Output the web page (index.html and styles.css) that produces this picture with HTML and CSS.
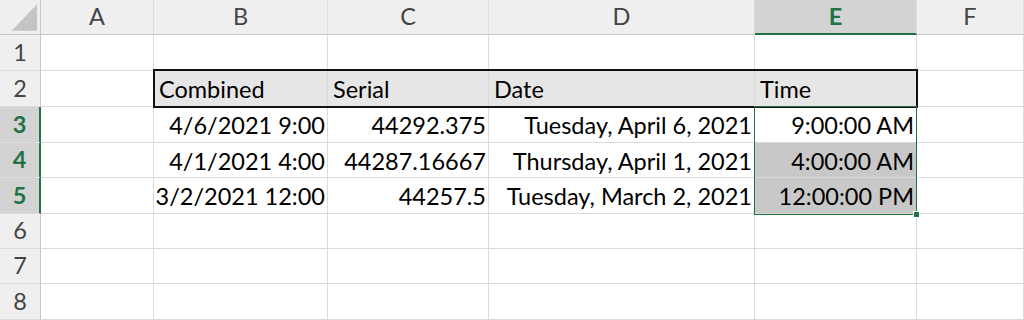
FILE: index.html
```html
<!DOCTYPE html>
<html lang="en">
<head>
    <meta charset="UTF-8">
    <title>Sheet1</title>
    <link rel="stylesheet" href="styles.css">
</head>
<body>
    <div class="sheet">
        <div class="cells">
            <!-- column headers -->
            <div class="corner">
                <svg width="41" height="35" viewBox="0 0 41 35"><polygon points="38,4 38,31 12,31" fill="#c4c4c4"/></svg>
            </div>
            <div class="col-hd">A</div>
            <div class="col-hd">B</div>
            <div class="col-hd">C</div>
            <div class="col-hd">D</div>
            <div class="col-hd active">E</div>
            <div class="col-hd">F</div>

            <div class="row-hd">1</div>
            <div class="cell"></div><div class="cell"></div><div class="cell"></div><div class="cell"></div><div class="cell"></div><div class="cell"></div>

            <div class="row-hd">2</div>
            <div class="cell"></div>
            <div class="cell th">Combined</div>
            <div class="cell th">Serial</div>
            <div class="cell th">Date</div>
            <div class="cell th">Time</div>
            <div class="cell"></div>

            <div class="row-hd active">3</div>
            <div class="cell"></div>
            <div class="cell num">4/6/2021 9:00</div>
            <div class="cell num">44292.375</div>
            <div class="cell num">Tuesday, April 6, 2021</div>
            <div class="cell num">9:00:00 AM</div>
            <div class="cell"></div>

            <div class="row-hd active">4</div>
            <div class="cell"></div>
            <div class="cell num">4/1/2021 4:00</div>
            <div class="cell num">44287.16667</div>
            <div class="cell num">Thursday, April 1, 2021</div>
            <div class="cell num picked">4:00:00 AM</div>
            <div class="cell"></div>

            <div class="row-hd active">5</div>
            <div class="cell"></div>
            <div class="cell num">3/2/2021 12:00</div>
            <div class="cell num">44257.5</div>
            <div class="cell num">Tuesday, March 2, 2021</div>
            <div class="cell num picked">12:00:00 PM</div>
            <div class="cell"></div>

            <div class="row-hd">6</div>
            <div class="cell"></div><div class="cell"></div><div class="cell"></div><div class="cell"></div><div class="cell"></div><div class="cell"></div>

            <div class="row-hd">7</div>
            <div class="cell"></div><div class="cell"></div><div class="cell"></div><div class="cell"></div><div class="cell"></div><div class="cell"></div>

            <div class="row-hd">8</div>
            <div class="cell"></div><div class="cell"></div><div class="cell"></div><div class="cell"></div><div class="cell"></div><div class="cell"></div>
        </div>

        <!-- borders and selection drawn over the cells -->
        <div class="marks">
            <div class="tbl-frame"></div>
            <div class="selection"><span class="fill-handle"></span></div>
        </div>
    </div>
</body>
</html>
```

FILE: styles.css
```css
body {
    margin: 0;
    background: #fff;
    overflow: hidden;
    font-family: Lato, "Liberation Sans", sans-serif;
    color: #000;
}
.sheet {
    display: grid;
    width: 1024px;
    height: 320px;
}
.cells, .marks {
    grid-area: 1 / 1;
    display: grid;
    grid-template-columns: 41px 113px 174px 161px 266px 162px 107px;
    grid-template-rows: 35px 36px 36px 36px 35px 36px 35px 35px 36px;
}
.marks {
    pointer-events: none;
}
.cells > div {
    box-sizing: border-box;
    border-right: 1px solid #dadada;
    border-bottom: 1px solid #dadada;
    font-size: 23.5px;
    line-height: 1;
    display: flex;
    align-items: center;
    white-space: nowrap;
}
.corner {
    background: #efefef;
    border-bottom-color: #c6c6c6 !important;
    border-right-color: #c6c6c6 !important;
}
.corner svg {
    display: block;
}
.col-hd {
    background: #efefef;
    color: #444;
    justify-content: center;
    border-bottom-color: #c6c6c6 !important;
    border-right-color: #dcdcdc !important;
}
.col-hd.active {
    background: #d3d3d3;
    color: #217346;
    font-weight: bold;
    border-bottom: 2px solid #217346 !important;
}
.row-hd {
    background: #efefef;
    color: #444;
    justify-content: center;
    border-right-color: #c6c6c6 !important;
    border-bottom-color: #dcdcdc !important;
}
.row-hd.active {
    background: #d3d3d3;
    color: #217346;
    font-weight: bold;
    border-right: 2px solid #217346 !important;
}
.cell {
    padding: 3px 2px 0 5px;
}
.th {
    background: #e7e6e6;
}
.num {
    justify-content: flex-end;
}
.picked {
    background: #c8c8c8;
}
.tbl-frame {
    grid-column: 3 / 7;
    grid-row: 3;
    margin: -2px -1px -1px -1px;
    border: 2px solid #111;
}
.selection {
    grid-column: 6 / 7;
    grid-row: 4 / 7;
    margin: -1px 0 -1px -1px;
    border: 1px solid #217346;
    position: relative;
}
.fill-handle {
    position: absolute;
    right: -4px;
    bottom: -4px;
    width: 5px;
    height: 5px;
    background: #217346;
    border: 1px solid #fff;
}
```
